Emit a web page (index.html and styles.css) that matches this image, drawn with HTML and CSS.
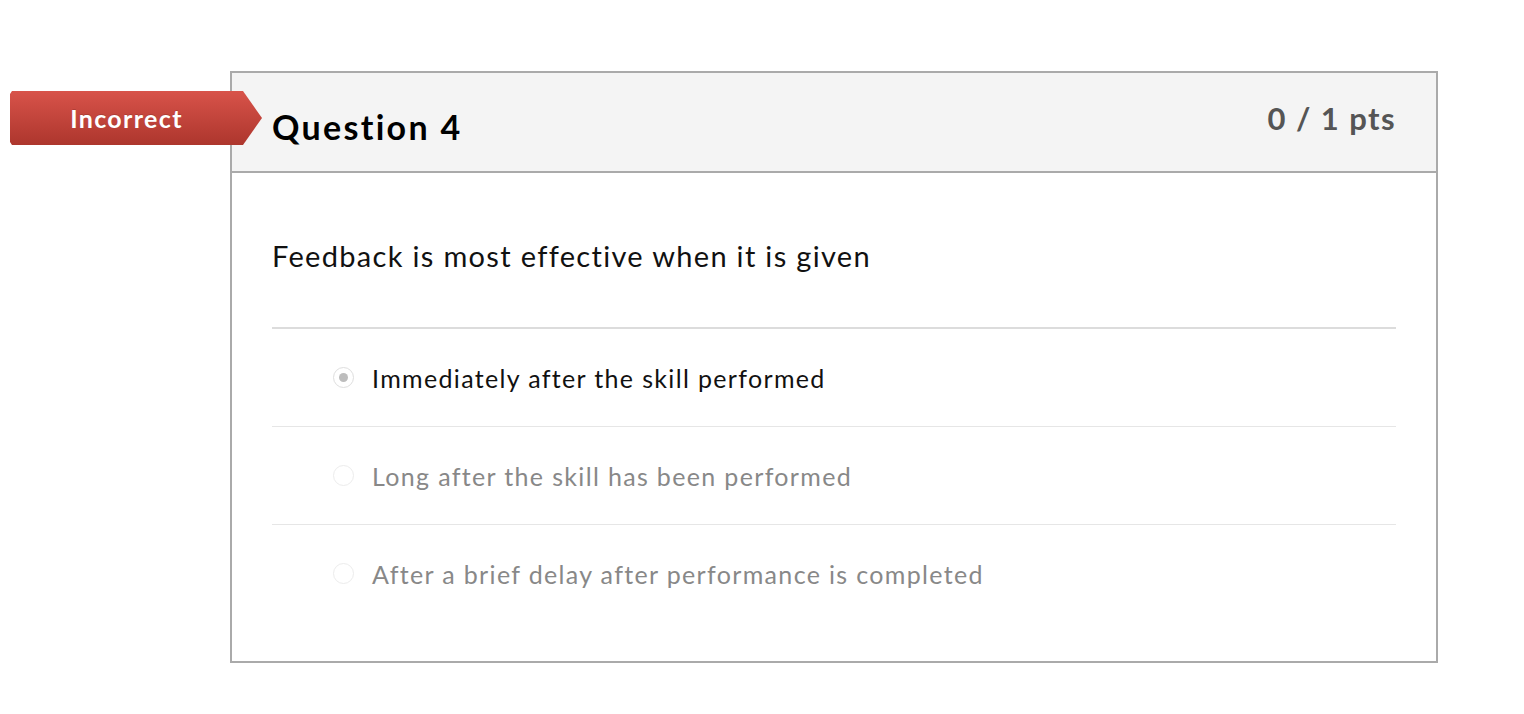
FILE: index.html
```html
<!DOCTYPE html>
<html>
<head>
<meta charset="utf-8">
<link rel="stylesheet" href="styles.css">
</head>
<body>
<div class="page">
  <div class="card">
    <div class="badge">Incorrect</div>
    <div class="card-header">
      <h2 class="q-title">Question 4</h2>
      <div class="q-points">0 / 1 pts</div>
    </div>
    <div class="card-body">
      <p class="q-text">Feedback is most effective when it is given</p>
      <ul class="answers">
        <li class="answer selected"><span class="radio"><span class="dot"></span></span><span class="a-text">Immediately after the skill performed</span></li>
        <li class="answer"><span class="radio"></span><span class="a-text">Long after the skill has been performed</span></li>
        <li class="answer"><span class="radio"></span><span class="a-text">After a brief delay after performance is completed</span></li>
      </ul>
    </div>
  </div>
</div>
</body>
</html>
```
FILE: styles.css
```css
html, body {
  margin: 0;
  padding: 0;
  background: #fff;
  font-family: Lato, "Open Sans", sans-serif;
}
.page {
  padding: 71px 0 0 230px;
}
.card {
  position: relative;
  width: 1204px;
  border: 2px solid #aaaaaa;
  background: #fff;
}
.badge {
  position: absolute;
  left: -222px;
  top: 18px;
  width: 252px;
  height: 54px;
  box-sizing: border-box;
  padding-right: 19px;
  display: flex;
  align-items: center;
  justify-content: center;
  color: #fff;
  font-size: 25px;
  font-weight: 700;
  letter-spacing: 1.35px;
  background: linear-gradient(#d8534a, #ad362d);
  clip-path: polygon(0 3px, 2px 0, 233px 0, 252px 27px, 233px 54px, 2px 54px, 0 51px);
  text-shadow: 0 -1px 0 rgba(0,0,0,0.15);
}
.card-header {
  height: 98px;
  background: #f4f4f4;
  border-bottom: 2px solid #aaaaaa;
  display: flex;
  justify-content: space-between;
  align-items: flex-start;
  padding: 0 40px 0 40px;
}
.q-title {
  margin: 0;
  padding-top: 34px;
  font-size: 34px;
  font-weight: 700;
  color: #000;
  line-height: 40px;
  letter-spacing: 2.3px;
}
.q-points {
  padding-top: 27px;
  font-size: 31px;
  font-weight: 700;
  color: #555;
  line-height: 36px;
  letter-spacing: 1.43px;
}
.card-body {
  padding: 63px 40px 39px;
}
.q-text {
  margin: 0 0 51px;
  font-size: 29px;
  line-height: 40px;
  color: #111;
  letter-spacing: 1.32px;
}
.answers {
  list-style: none;
  margin: 0;
  padding: 0;
  border-top: 2px solid #dcdcdc;
}
.answer {
  height: 97px;
  display: flex;
  align-items: center;
  border-bottom: 1px solid #e6e6e6;
  padding-left: 61px;
  color: #888;
  font-size: 25px;
  letter-spacing: 1.34px;
}
.answer:last-child {
  border-bottom: none;
}
.answer.selected {
  color: #111;
}
.radio {
  width: 21px;
  height: 21px;
  border-radius: 50%;
  border: 1px solid #ececec;
  background: #fff;
  box-sizing: border-box;
  display: flex;
  align-items: center;
  justify-content: center;
  margin-right: 18px;
}
.selected .radio {
  border-color: #dedede;
}
.dot {
  width: 9px;
  height: 9px;
  border-radius: 50%;
  background: #bdbdbd;
}
```
